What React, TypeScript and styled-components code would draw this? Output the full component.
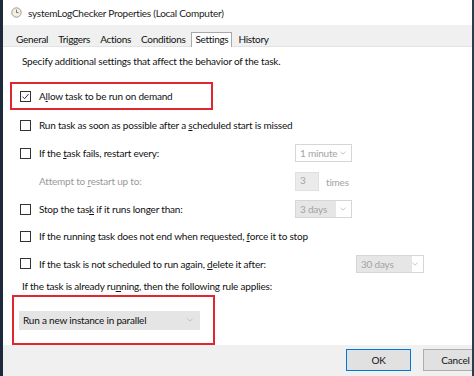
import React from "react";
import styled, { createGlobalStyle } from "styled-components";

const Global = createGlobalStyle`
  html, body { margin: 0; padding: 0; }
  body {
    width: 474px; height: 376px; overflow: hidden;
    font-family: Lato, "Noto Sans", sans-serif;
    font-size: 10px; letter-spacing: -0.2px; color: #111111; background: #ffffff;
  }
`;

const Frame = styled.div`
  display: flex;
  width: 474px;
  height: 376px;
`;

const Edge = styled.div<{ $w: number; $c: string }>`
  width: ${(p) => p.$w}px;
  flex: none;
  background: ${(p) => p.$c};
`;

const Win = styled.div`
  flex: 1;
  display: flex;
  flex-direction: column;
  min-width: 0;
  overflow: hidden;
`;

const TitleBar = styled.div`
  height: 25px;
  display: flex;
  align-items: center;
  gap: 6px;
  padding: 1px 0 0 8px;
  box-sizing: border-box;
  background: #ffffff;
  font-size: 10px;
  letter-spacing: -0.25px;
  color: #222;
`;

const TabStrip = styled.div`
  height: 23px;
  background: #f0f0f0;
  display: flex;
  align-items: flex-end;
  padding-left: 8px;
  border-bottom: 1px solid #e3e3e3;
  box-sizing: border-box;
`;

const Tab = styled.div<{ $active?: boolean }>`
  padding: 0 3px 2px;
  margin: 0 1px;
  height: ${(p) => (p.$active ? 15 : 14)}px;
  box-sizing: border-box;
  display: flex;
  align-items: center;
  letter-spacing: -0.3px;
  color: #111;
  background: ${(p) => (p.$active ? "#ffffff" : "transparent")};
  border: 1px solid ${(p) => (p.$active ? "#a8a8a8" : "transparent")};
  border-bottom: none;
  margin-bottom: ${(p) => (p.$active ? -1 : 0)}px;
`;

const Content = styled.div`
  flex: 1;
  background: #ffffff;
  padding: 5px 0 0 9px;
  display: flex;
  flex-direction: column;
`;

const Para = styled.div<{ $h: number; $muted?: boolean; $indent?: number }>`
  height: ${(p) => p.$h}px;
  display: flex;
  align-items: center;
  padding-left: ${(p) => p.$indent ?? 0}px;
  color: ${(p) => (p.$muted ? "#9a9a9a" : "#111")};
  white-space: nowrap;
`;

const Highlight = styled.div<{ $w: number; $h: number; $ml: number; $mt: number }>`
  width: ${(p) => p.$w}px;
  height: ${(p) => p.$h}px;
  margin-left: ${(p) => p.$ml}px;
  margin-top: ${(p) => p.$mt}px;
  box-sizing: border-box;
  border: 2px solid #e0262e;
  display: flex;
  align-items: center;
`;

const Row = styled.div<{ $h: number }>`
  height: ${(p) => p.$h}px;
  display: flex;
  align-items: center;
  white-space: nowrap;
`;

const Box = styled.span`
  width: 11px;
  height: 11px;
  box-sizing: border-box;
  border: 1px solid #333;
  background: #fff;
  display: inline-flex;
  align-items: center;
  justify-content: center;
  margin-left: 8px;
  margin-right: 8px;
  flex: none;
`;

const Label = styled.span`
  flex: none;
`;

const Field = styled.div<{ $w: number; $fill?: number }>`
  position: relative;
  width: ${(p) => p.$w}px;
  height: 18px;
  box-sizing: border-box;
  border: 1px solid #d6d6d6;
  background: linear-gradient(
    to right,
    #e6e6e6 0,
    #e6e6e6 ${(p) => p.$fill ?? 0}px,
    #ffffff ${(p) => p.$fill ?? 0}px
  );
  color: #a3a3a3;
  display: flex;
  align-items: center;
  padding-left: 4px;
`;

const Slot = styled.div<{ $x: number }>`
  width: ${(p) => p.$x}px;
  flex: none;
  display: flex;
  align-items: center;
`;

const Chevron = styled.span<{ $r?: number }>`
  position: absolute;
  right: ${(p) => p.$r ?? 5}px;
  top: 50%;
  transform: translateY(-50%);
  display: flex;
`;

const TimesBox = styled.div`
  width: 24px;
  height: 19px;
  box-sizing: border-box;
  background: #ebebeb;
  border: 1px solid #e0e0e0;
  color: #a3a3a3;
  padding: 1px 0 0 4px;
`;

const Muted = styled.span`
  color: #a3a3a3;
  margin-left: 7px;
  padding-top: 2px;
`;

const Select = styled.div`
  width: 181px;
  height: 19px;
  box-sizing: border-box;
  margin-left: 5px;
  background: #e5e5e5;
  display: flex;
  align-items: center;
  padding-left: 4px;
  position: relative;
  color: #111;
`;

const Footer = styled.div`
  height: 31px;
  background: #f0f0f0;
  display: flex;
  align-items: flex-start;
  justify-content: flex-end;
  padding-top: 4px;
  box-sizing: border-box;
`;

const Buttons = styled.div`
  display: flex;
  gap: 12px;
  margin-right: -16px;
`;

const Btn = styled.button<{ $primary?: boolean }>`
  width: 65px;
  height: 22px;
  box-sizing: border-box;
  background: #e1e1e1;
  border: 1px solid ${(p) => (p.$primary ? "#0078d7" : "#adadad")};
  font-family: inherit;
  font-size: 10px;
  letter-spacing: inherit;
  color: #111;
  padding: 0;
`;

const Chev = () => (
  <svg width="6" height="4" viewBox="0 0 6 4">
    <path d="M0.5 0.8 L3 3.2 L5.5 0.8" fill="none" stroke="#b5b5b5" strokeWidth="0.8" />
  </svg>
);

const Check = () => (
  <svg width="9" height="9" viewBox="0 0 9 9">
    <path d="M1.5 4.6 L3.6 6.7 L7.6 2" fill="none" stroke="#333" strokeWidth="1" />
  </svg>
);

const ClockIcon = () => (
  <svg width="11" height="11" viewBox="0 0 11 11">
    <circle cx="5.5" cy="5.5" r="4.7" fill="#f3efe2" stroke="#9a9a8c" strokeWidth="1" />
    <path d="M5.5 2.6 V5.6 H7.6" fill="none" stroke="#6d6d66" strokeWidth="0.9" />
  </svg>
);

export default function App() {
  return (
    <>
      <Global />
      <Frame>
        <Edge $w={3} $c="#1c2a3b" />
        <Win>
          <TitleBar>
            <ClockIcon />
            <span>systemLogChecker Properties (Local Computer)</span>
          </TitleBar>
          <TabStrip>
            <Tab>General</Tab>
            <Tab>Triggers</Tab>
            <Tab>Actions</Tab>
            <Tab>Conditions</Tab>
            <Tab $active>Settings</Tab>
            <Tab>History</Tab>
          </TabStrip>
          <Content>
            <Para $h={17} $indent={10}>
              <span>Specify additional settings that affect the behavior of the task.</span>
            </Para>
            <Highlight $w={203} $h={28} $ml={-2} $mt={13}>
              <Box>
                <Check />
              </Box>
              <Label>
                A<u>l</u>low task to be run on demand
              </Label>
            </Highlight>
            <Row $h={30}>
              <Box />
              <Label>
                Run task as soon as possible after a <u>s</u>cheduled start is missed
              </Label>
            </Row>
            <Row $h={26}>
              <Slot $x={283}>
                <Box />
                <Label>
                  If the <u>t</u>ask fails, restart every:
                </Label>
              </Slot>
              <Field $w={57}>
                1 minute
                <Chevron>
                  <Chev />
                </Chevron>
              </Field>
            </Row>
            <Row $h={30}>
              <Slot $x={283}>
                <Para $h={30} $muted $indent={27}>
                  <span>
                    Attempt to <u>r</u>estart up to:
                  </span>
                </Para>
              </Slot>
              <TimesBox>3</TimesBox>
              <Muted>times</Muted>
            </Row>
            <Row $h={26}>
              <Slot $x={283}>
                <Box />
                <Label>
                  Stop the tas<u>k</u> if it runs longer than:
                </Label>
              </Slot>
              <Field $w={57} $fill={40}>
                3 days
                <Chevron>
                  <Chev />
                </Chevron>
              </Field>
            </Row>
            <Row $h={28}>
              <Box />
              <Label>
                If the running task does not end when requested, <u>f</u>orce it to stop
              </Label>
            </Row>
            <Row $h={27}>
              <Slot $x={344}>
                <Box />
                <Label>
                  If the task is not scheduled to run again, <u>d</u>elete it after:
                </Label>
              </Slot>
              <Field $w={68} $fill={55}>
                30 days
                <Chevron>
                  <Chev />
                </Chevron>
              </Field>
            </Row>
            <Para $h={18} $indent={10}>
              <span>
                If the task is already ru<u>n</u>ning, then the following rule applies:
              </span>
            </Para>
            <Highlight $w={203} $h={50} $ml={0} $mt={0}>
              <Select>
                Run a new instance in parallel
                <Chevron $r={7}>
                  <Chev />
                </Chevron>
              </Select>
            </Highlight>
          </Content>
          <Footer>
            <Buttons>
              <Btn $primary>OK</Btn>
              <Btn>Cancel</Btn>
            </Buttons>
          </Footer>
        </Win>
        <Edge $w={2} $c="#2a3c4f" />
      </Frame>
    </>
  );
}
